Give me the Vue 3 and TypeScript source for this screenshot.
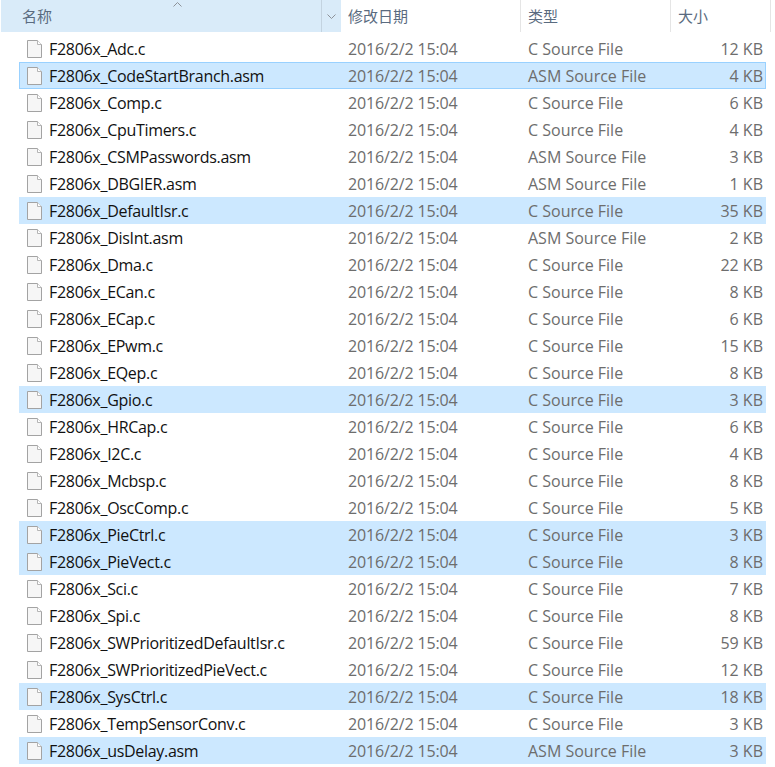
<script setup lang="ts">
interface Row { name: string; type: 'C' | 'ASM'; size: number; sel?: boolean; focus?: boolean }
const rows: Row[] = [
  { name: 'F2806x_Adc.c', type: 'C', size: 12 },
  { name: 'F2806x_CodeStartBranch.asm', type: 'ASM', size: 4, sel: true, focus: true },
  { name: 'F2806x_Comp.c', type: 'C', size: 6 },
  { name: 'F2806x_CpuTimers.c', type: 'C', size: 4 },
  { name: 'F2806x_CSMPasswords.asm', type: 'ASM', size: 3 },
  { name: 'F2806x_DBGIER.asm', type: 'ASM', size: 1 },
  { name: 'F2806x_DefaultIsr.c', type: 'C', size: 35, sel: true },
  { name: 'F2806x_DisInt.asm', type: 'ASM', size: 2 },
  { name: 'F2806x_Dma.c', type: 'C', size: 22 },
  { name: 'F2806x_ECan.c', type: 'C', size: 8 },
  { name: 'F2806x_ECap.c', type: 'C', size: 6 },
  { name: 'F2806x_EPwm.c', type: 'C', size: 15 },
  { name: 'F2806x_EQep.c', type: 'C', size: 8 },
  { name: 'F2806x_Gpio.c', type: 'C', size: 3, sel: true },
  { name: 'F2806x_HRCap.c', type: 'C', size: 6 },
  { name: 'F2806x_I2C.c', type: 'C', size: 4 },
  { name: 'F2806x_Mcbsp.c', type: 'C', size: 8 },
  { name: 'F2806x_OscComp.c', type: 'C', size: 5 },
  { name: 'F2806x_PieCtrl.c', type: 'C', size: 3, sel: true },
  { name: 'F2806x_PieVect.c', type: 'C', size: 8, sel: true },
  { name: 'F2806x_Sci.c', type: 'C', size: 7 },
  { name: 'F2806x_Spi.c', type: 'C', size: 8 },
  { name: 'F2806x_SWPrioritizedDefaultIsr.c', type: 'C', size: 59 },
  { name: 'F2806x_SWPrioritizedPieVect.c', type: 'C', size: 12 },
  { name: 'F2806x_SysCtrl.c', type: 'C', size: 18, sel: true },
  { name: 'F2806x_TempSensorConv.c', type: 'C', size: 3 },
  { name: 'F2806x_usDelay.asm', type: 'ASM', size: 3, sel: true },
]
</script>

<template>
  <div class="explorer">
    <div class="header">
      <div class="col-name">
        <span class="label">名称</span>
        <svg class="sort" width="9" height="5" viewBox="0 0 9 5"><path d="M0.5 4.5 L4.5 0.5 L8.5 4.5" fill="none" stroke="#8d9299" stroke-width="1" /></svg>
        <div class="drop">
          <svg width="9" height="5" viewBox="0 0 9 5"><path d="M0.5 0.5 L4.5 4.5 L8.5 0.5" fill="none" stroke="#8d9299" stroke-width="1" /></svg>
        </div>
      </div>
      <div class="col col-date"><span class="label">修改日期</span></div>
      <div class="col col-type"><span class="label">类型</span></div>
      <div class="col col-size"><span class="label">大小</span></div>
    </div>
    <div class="list">
      <div v-for="r in rows" :key="r.name" class="row" :class="{ sel: r.sel, focus: r.focus }">
        <svg class="icon" width="15" height="18" viewBox="0 0 15 18">
          <path d="M0.5 0.5 H10.5 L14.5 4.5 V17.5 H0.5 Z" fill="#f6f6f6" stroke="#a3a3a3" />
          <path d="M10.5 0.5 V4.5 H14.5" fill="#fff" stroke="#b5b5b5" />
        </svg>
        <span class="name">{{ r.name }}</span>
        <span class="date">2016/2/2 15:04</span>
        <span class="type">{{ r.type }} Source File</span>
        <span class="size">{{ r.size }} KB</span>
      </div>
    </div>
  </div>
</template>

<style>
html, body { background: #fff; }
</style>

<style scoped>
.explorer {
  width: 775px;
  height: 767px;
  overflow: hidden;
  background: #fff;
  font-family: "Open Sans", "Noto Sans CJK SC", sans-serif;
  font-size: 16px;
}
.header {
  display: flex;
  height: 32px;
  padding-left: 1px;
  box-sizing: border-box;
}
.label {
  font-family: "Noto Sans CJK SC", sans-serif;
  font-size: 15px;
  color: #5a6b80;
  line-height: 32px;
}
.col-name {
  position: relative;
  width: 340px;
  background: #d9ebf9;
  padding-left: 21px;
  box-sizing: border-box;
}
.sort { position: absolute; left: 172px; top: 2px; }
.drop {
  position: absolute;
  right: 0;
  top: 0;
  width: 20px;
  height: 32px;
  border-left: 1px solid #c3d3e0;
  box-sizing: border-box;
  display: flex;
  align-items: center;
  justify-content: center;
}
.col {
  box-sizing: border-box;
  border-right: 1px solid #e5e5e5;
  padding-left: 7px;
}
.col-date { width: 180px; }
.col-type { width: 150px; }
.col-size { width: 100px; }
.list {
  padding-left: 19px;
  padding-top: 3px;
  width: 766px;
  box-sizing: border-box;
}
.row {
  display: flex;
  align-items: center;
  height: 27px;
  box-sizing: border-box;
  padding-left: 8px;
  color: #6d6d6d;
}
.row.sel { background: #cce8ff; }
.row.focus { border: 1px solid #99d1ff; padding-left: 7px; }
.icon { flex: none; }
.name {
  width: 299px;
  margin-left: 7px;
  flex: none;
  color: #111;
  letter-spacing: -0.3px;
}
.date { width: 180px; flex: none; letter-spacing: -0.15px; }
.type { width: 150px; flex: none; }
.size { width: 85px; flex: none; text-align: right; }
</style>
